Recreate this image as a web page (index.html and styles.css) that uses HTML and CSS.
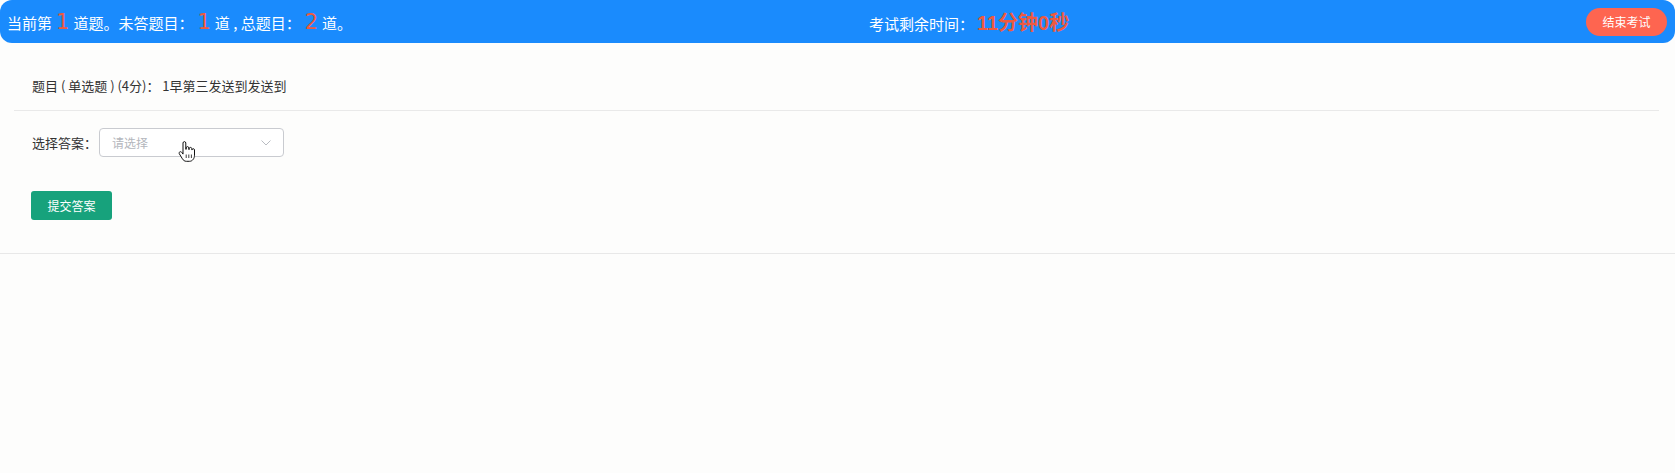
FILE: index.html
```html
<!DOCTYPE html>
<html lang="zh-CN">
<head>
<meta charset="utf-8">
<title>考试</title>
<link rel="stylesheet" href="styles.css">
</head>
<body>
<header class="topbar">
  <div class="progress">当前第 <span class="num">1</span> 道题。未答题目： <span class="num">1</span> 道 , 总题目： <span class="num">2</span> 道。</div>
  <div class="timer">考试剩余时间： <span class="time">11分钟0秒</span></div>
  <button class="end-btn">结束考试</button>
</header>
<main class="card">
  <div class="title">题目 ( 单选题 ) (4分)： 1早第三发送到发送到</div>
  <div class="answer">
    <span class="label">选择答案：</span>
    <div class="select">
      <span class="placeholder">请选择</span>
      <svg class="chev" width="10" height="6" viewBox="0 0 10 6"><path d="M0.5 0.5 L5 5 L9.5 0.5" fill="none" stroke="#b9bcc2" stroke-width="1"/></svg>
      <svg class="cursor" width="17" height="22" viewBox="0 0 17 22"><path d="M5 2c0-.8.6-1.4 1.4-1.4S7.8 1.2 7.8 2v6.3h.4V6.9c0-.8.6-1.3 1.3-1.3s1.3.5 1.3 1.3v1.6h.4V7.6c0-.7.6-1.2 1.3-1.2s1.3.5 1.3 1.2v1.2h.3c0-.7.6-1.1 1.2-1.1s1.2.5 1.2 1.2v5.3c0 3.2-2 6.1-5 6.1H8.4c-1.9 0-3-1-4-2.5l-3-4.9c-.5-.8-.3-1.6.4-2s1.5-.2 2 .5L5 13.1V2z" fill="#fff" stroke="#111" stroke-width="1"/><path d="M8.2 13.5v3.5M10.8 13.5v3.5M13.4 13.5v3.5" stroke="#111" stroke-width=".8"/></svg>
    </div>
  </div>
  <div class="actions">
    <button class="submit">提交答案</button>
  </div>
</main>
</body>
</html>
```

FILE: styles.css
```css
html, body {
  margin: 0;
  padding: 0;
  background: #fdfdfc;
  font-family: "Noto Sans CJK SC", "Noto Sans", sans-serif;
}

.topbar {
  display: flex;
  justify-content: space-between;
  align-items: center;
  height: 43px;
  padding: 0 8px 0 7px;
  background: #1a8bfd;
  border-radius: 12px;
  color: #fff;
  font-size: 15px;
  box-sizing: border-box;
}

.progress, .timer {
  white-space: nowrap;
  display: flex;
  align-items: baseline;
}

.num {
  font-family: "DejaVu Sans", sans-serif;
  font-size: 21px;
  color: #ee5a3f;
  margin: 0 4px;
}

.time {
  font-family: "Liberation Sans", "Noto Sans CJK SC", sans-serif;
  font-size: 20px;
  font-weight: bold;
  color: #ee5a3f;
  margin-left: 3px;
}

.end-btn {
  width: 81px;
  height: 28px;
  border: none;
  border-radius: 14px;
  background: #fe6550;
  color: #fff;
  font-family: "Noto Sans CJK SC", sans-serif;
  font-size: 12px;
  padding: 0;
}

.card {
  border-bottom: 1px solid #e8e8e8;
  padding-bottom: 33px;
}

.title {
  margin: 0 16px 0 14px;
  padding: 32px 0 13px 18px;
  line-height: 22px;
  font-size: 13px;
  color: #333;
  border-bottom: 1px solid #e9e9e9;
}

.answer {
  display: flex;
  align-items: center;
  padding: 17px 0 0 32px;
  font-size: 13px;
  color: #333;
}

.select {
  position: relative;
  display: flex;
  align-items: center;
  justify-content: space-between;
  width: 185px;
  height: 29px;
  box-sizing: border-box;
  margin-left: 2px;
  padding: 0 12px;
  border: 1px solid #c9cbd0;
  border-radius: 4px;
  background: #fff;
}

.placeholder {
  font-size: 12px;
  color: #b3b6bc;
}

.cursor {
  position: absolute;
  left: 78px;
  top: 12px;
}

.actions {
  padding: 34px 0 0 31px;
}

.submit {
  width: 81px;
  height: 29px;
  border: none;
  border-radius: 3px;
  background: #17a27c;
  color: #fff;
  font-family: "Noto Sans CJK SC", sans-serif;
  font-size: 12px;
  padding: 0;
}
```
